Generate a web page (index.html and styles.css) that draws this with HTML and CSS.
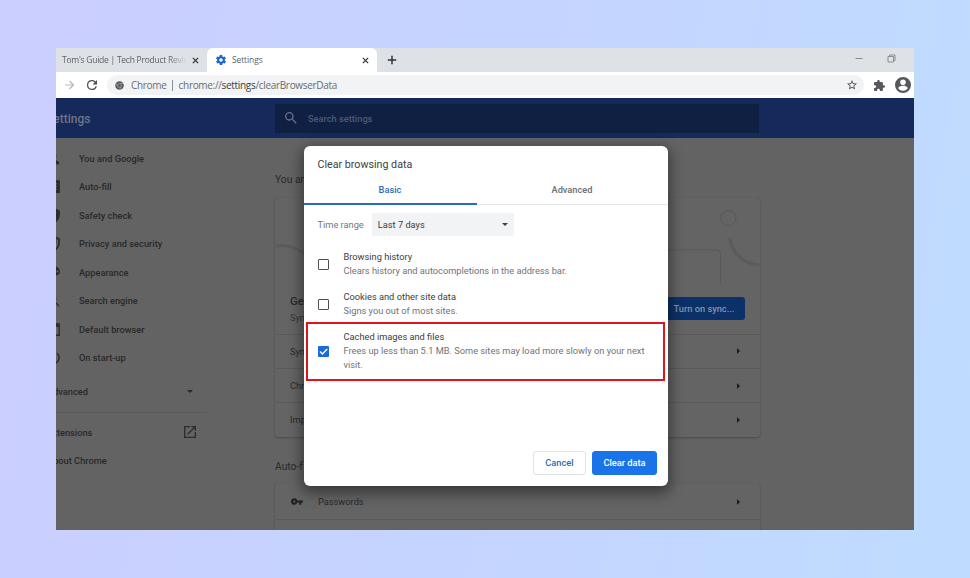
FILE: index.html
```html
<!DOCTYPE html>
<html lang="en">
<head>
<meta charset="UTF-8">
<meta name="viewport" content="width=device-width, initial-scale=1.0">
<title>Settings - Clear browsing data</title>
<link rel="stylesheet" href="styles.css">
</head>
<body>

<div class="window">
  <div class="tabs">
    <div class="tab">
      <span class="tab-title fade">Tom's Guide | Tech Product Review</span>
      <svg class="close" viewBox="0 0 8 8"><path d="M1 1l6 6M7 1L1 7"/></svg>
    </div>
    <div class="tab active">
      <svg class="gear" viewBox="0 0 24 24"><path d="M19.4 13c0-.3.1-.6.1-1s0-.7-.1-1l2.1-1.600c.2-.2.3-.4.1-.7l-2-3.400c-.1-.2-.4-.3-.6-.2l-2.500 1c-.5-.4-1.100-.7-1.700-1l-.4-2.600c0-.3-.2-.5-.5-.5h-4c-.2 0-.4.200-.5.400l-.4 2.700c-.6.300-1.200.600-1.700 1l-2.500-1c-.2-.1-.5 0-.6.200l-2 3.400c-.1.300-.1.600.1.700L4.600 11c0 .3-.1.600-.1 1s0 .7.100 1l-2.100 1.600c-.2.200-.3.400-.1.700l2 3.400c.1.200.4.300.6.200l2.500-1c.5.400 1.100.7 1.700 1l.4 2.600c0 .3.200.5.500.5h4c.2 0 .5-.2.500-.4l.4-2.700c.6-.3 1.200-.6 1.700-1l2.500 1c.2.100.5 0 .6-.2l2-3.400c.1-.2.100-.5-.1-.7L19.400 13zM12 15.500a3.500 3.500 0 1 1 0-7 3.500 3.500 0 0 1 0 7z"/></svg>
      <span class="tab-title">Settings</span>
      <svg class="close" viewBox="0 0 8 8"><path d="M1 1l6 6M7 1L1 7"/></svg>
    </div>
    <svg class="plus" viewBox="0 0 10 10"><path d="M5 .8v8.400M.8 5h8.400"/></svg>
    <div class="controls">
      <svg width="8" height="10" viewBox="0 0 8 10"><path d="M.5 4.500h7"/></svg>
      <svg width="9" height="9" viewBox="0 0 9 9"><path d="M1 2.500h5.500V8H1zM2.500 2.500V1H8v5.500H6.500"/></svg>
    </div>
  </div>

  <div class="toolbar">
    <svg class="forward" viewBox="0 0 11 10"><path d="M1 5h8.500M5.500 1l4 4-4 4"/></svg>
    <svg class="reload" viewBox="4 4 16 16"><path d="M17.650 6.350A7.960 7.960 0 0 0 12 4a8 8 0 1 0 7.730 10h-2.080A6 6 0 1 1 12 6c1.660 0 3.140.690 4.220 1.780L13 11h7V4l-2.350 2.350z"/></svg>
    <div class="omnibox">
      <svg class="chrome-icon" viewBox="0 0 20 20"><circle cx="10" cy="10" r="9.500"/><path d="M10 5.500h8.300M6.100 12.300L2 5.200M13.900 12.300l-4.200 7.200"/><circle class="ring" cx="10" cy="10" r="4.300"/></svg>
      <span class="scheme">Chrome</span>
      <span class="sep"></span>
      <span class="url">chrome://<b>settings</b>/clearBrowserData</span>
      <svg class="star" viewBox="2 2 20 20"><path d="M22 9.240l-7.190-.620L12 2 9.190 8.630 2 9.240l5.460 4.730L5.820 21 12 17.270 18.180 21l-1.630-7.030L22 9.240zM12 15.400l-3.760 2.270 1-4.280-3.320-2.880 4.380-.380L12 6.100l1.710 4.040 4.380.380-3.320 2.880 1 4.280L12 15.400z"/></svg>
    </div>
    <svg class="puzzle" viewBox="2 1 21 21"><path d="M20.500 11H19V7a2 2 0 0 0-2-2h-4V3.500a2.500 2.500 0 0 0-5 0V5H4a2 2 0 0 0-2 2v3.800h1.500a2.700 2.700 0 0 1 0 5.400H2V20c0 1.100.900 2 2 2h3.800v-1.500a2.700 2.700 0 0 1 5.400 0V22H17a2 2 0 0 0 2-2v-4h1.500a2.500 2.500 0 0 0 0-5z"/></svg>
    <svg class="avatar" viewBox="2 2 20 20"><path d="M12 2a10 10 0 1 0 0 20 10 10 0 0 0 0-20zm0 3a3.500 3.500 0 1 1 0 7 3.500 3.500 0 0 1 0-7zm0 14.200a7.200 7.200 0 0 1-6-3.220c.03-1.990 4-3.080 6-3.080s5.970 1.090 6 3.080a7.200 7.200 0 0 1-6 3.220z"/></svg>
  </div>

  <div class="header">
    <h1>Settings</h1>
    <div class="search">
      <svg viewBox="3 3 18 18"><path d="M15.500 14h-.790l-.280-.270A6.500 6.500 0 1 0 13.730 14.430l.270.280v.790l5 4.990L20.490 19l-4.990-5zm-6 0a4.500 4.500 0 1 1 0-9 4.500 4.500 0 0 1 0 9z"/></svg>
      <span>Search settings</span>
    </div>
  </div>

  <div class="page">
    <div class="sidebar">
      <div class="item"><svg viewBox="0 0 24 24"><path d="M12 12a4 4 0 1 0 0-8 4 4 0 0 0 0 8zm0 2c-2.700 0-8 1.300-8 4v2h16v-2c0-2.700-5.300-4-8-4z"/></svg>You and Google</div>
      <div class="item"><svg viewBox="0 0 24 24"><path d="M3 3h18v18H3zM7 7v2h10V7zm0 4v2h10v-2zm0 4v2h10v-2z" fill-rule="evenodd"/></svg>Auto-fill</div>
      <div class="item"><svg viewBox="0 0 24 24"><path d="M12 1L3 5v6c0 5.500 3.800 10.700 9 12 5.200-1.300 9-6.500 9-12V5l-9-4zm-2 16l-4-4 1.400-1.400L10 14.200l4-4L15.400 11.600l-5.400 5.400z"/></svg>Safety check</div>
      <div class="item"><svg viewBox="0 0 24 24"><path d="M12 1L3 5v6c0 5.500 3.800 10.700 9 12 5.200-1.300 9-6.500 9-12V5l-9-4zm0 3l6.500 2.800V11c0 4.300-2.700 8.200-6.500 9.500V12h4V7h-4z" fill-rule="evenodd"/></svg>Privacy and security</div>
      <div class="item"><svg viewBox="0 0 24 24"><path d="M12 3a9 9 0 0 0 0 18c.8 0 1.500-.7 1.500-1.500 0-1-1-1.300-1-2 0-.8.700-1.500 1.500-1.500H16c2.800 0 5-2.200 5-5 0-4.400-4-8-9-8zm5.500 9a1.500 1.500 0 1 1 0-3 1.500 1.500 0 0 1 0 3z"/></svg>Appearance</div>
      <div class="item"><svg viewBox="0 0 24 24"><path d="M15.500 14h-.790l-.280-.270A6.500 6.500 0 1 0 13.730 14.430l.270.280v.790l5 4.990L20.490 19l-4.990-5zm-6 0a4.500 4.500 0 1 1 0-9 4.500 4.500 0 0 1 0 9z"/></svg>Search engine</div>
      <div class="item"><svg viewBox="0 0 24 24"><path d="M3 3h18v18H3zM5 8v11h14V8z" fill-rule="evenodd"/></svg>Default browser</div>
      <div class="item"><svg viewBox="0 0 24 24"><path d="M13 3h-2v10h2V3zm4.800 2.200l-1.400 1.400A7 7 0 1 1 7.600 6.600L6.200 5.200a9 9 0 1 0 11.600 0z"/></svg>On start-up</div>
      <div class="item wide advanced">Advanced<i class="down"></i></div>
      <div class="item wide">Extensions
        <svg class="launch" viewBox="3 3 18 18"><path d="M19 19H5V5h7V3H3v18h18v-9h-2v7zM14 3v2h3.600l-9.800 9.800 1.400 1.400L19 6.400V10h2V3h-7z"/></svg>
      </div>
      <div class="item wide">About Chrome</div>
    </div>

    <div class="main">
      <h2>You ar</h2>
      <div class="card">
        <svg class="art" viewBox="0 0 484 85">
          <path class="thick" d="M0 48Q22 44 42 68"/>
          <path d="M160 85V52h281q4 0 4 4v29"/>
          <circle cx="453" cy="20" r="7.500"/>
          <path class="thick" d="M454 40q5 25 30 27"/>
        </svg>
        <div class="sync">
          <div>
            <h3>Ge</h3>
            <p>Syn</p>
          </div>
          <span class="sync-btn">Turn on sync...</span>
        </div>
        <div class="row">Syn<i class="right"></i></div>
        <div class="row">Chr<i class="right"></i></div>
        <div class="row">Imp<i class="right"></i></div>
      </div>
      <h2 class="second">Auto-f</h2>
      <div class="card">
        <div class="row first">
          <svg class="key" viewBox="1 6 22 12"><path d="M12.650 10A6 6 0 1 0 12.650 14H16v4h4v-4h3v-4H12.650zM7 14a2 2 0 1 1 0-4 2 2 0 0 1 0 4z"/></svg>
          Passwords<i class="right"></i>
        </div>
        <div class="row"></div>
      </div>
    </div>
  </div>

  <div class="dialog">
    <div class="dialog-title">Clear browsing data</div>
    <div class="dialog-tabs">
      <span class="selected">Basic</span>
      <span>Advanced</span>
    </div>
    <div class="range">
      <span>Time range</span>
      <div class="select">Last 7 days<i class="down"></i></div>
    </div>
    <div class="option">
      <span class="box"></span>
      <div><h4>Browsing history</h4><p>Clears history and autocompletions in the address bar.</p></div>
    </div>
    <div class="option">
      <span class="box"></span>
      <div><h4>Cookies and other site data</h4><p>Signs you out of most sites.</p></div>
    </div>
    <div class="option cached">
      <span class="box checked"><svg viewBox="0 0 11 11"><path d="M2 5.600l2.400 2.400L9.200 3"/></svg></span>
      <div><h4>Cached images and files</h4><p>Frees up less than 5.1 MB. Some sites may load more slowly on your next visit.</p></div>
    </div>
    <div class="buttons">
      <span class="btn">Cancel</span>
      <span class="btn primary">Clear data</span>
    </div>
    <div class="highlight"></div>
  </div>
</div>

</body>
</html>
```

FILE: styles.css
```css
* {
  margin: 0;
  padding: 0;
  box-sizing: border-box;
}

body {
  height: 578px;
  padding: 48px 56px;
  overflow: hidden;
  background: linear-gradient(100deg, #cbceff 0%, #c5d4ff 50%, #bfdcff 100%);
  font-family: Roboto, "Liberation Sans", sans-serif;
  font-size: 9.26px;
}

svg {
  display: block;
  flex: none;
}

.window {
  position: relative;
  width: 858px;
  height: 482px;
  overflow: hidden;
  background: #636363;
}

/* Tab strip */
.tabs {
  display: flex;
  align-items: center;
  height: 24px;
  background: #dee1e6;
  color: #5f6368;
  font-family: "Open Sans", "Noto Sans", sans-serif;
  font-size: 8.5px;
  letter-spacing: -0.12px;
}

.tab {
  display: flex;
  align-items: center;
  width: 151px;
  height: 24px;
  padding: 0 8px 0 6px;
}

.tab.active {
  width: 170px;
  padding-left: 8px;
  background: #fff;
  border-radius: 6px 6px 0 0;
}

.tab-title {
  flex: 1;
  padding-bottom: 1px;
  overflow: hidden;
  white-space: nowrap;
}

.fade {
  margin-right: 5px;
  letter-spacing: -0.25px;
  -webkit-mask-image: linear-gradient(90deg, #000 85%, transparent);
  mask-image: linear-gradient(90deg, #000 85%, transparent);
}

.close {
  width: 7px;
  height: 7px;
  fill: none;
  stroke: #303236;
  stroke-width: 1.4;
}

.gear {
  width: 12px;
  height: 12px;
  margin-right: 5px;
  fill: #1967d2;
}

.plus {
  width: 10px;
  height: 10px;
  margin-left: 10px;
  fill: none;
  stroke: #303236;
  stroke-width: 1.5;
}

.controls {
  display: flex;
  gap: 24px;
  margin: -3px 18px 0 auto;
  fill: none;
  stroke: #8b8d91;
  stroke-width: 1;
}

/* Toolbar */
.toolbar {
  display: flex;
  align-items: center;
  height: 26px;
  padding: 0 3px 0 8px;
  background: #fff;
  font-family: "Open Sans", "Noto Sans", sans-serif;
  font-size: 10px;
  color: #6a6d71;
}

.forward {
  width: 11px;
  height: 10px;
  fill: none;
  stroke: #b5b7ba;
  stroke-width: 1.2;
}

.reload {
  width: 10px;
  height: 10px;
  margin: 0 10px 0 12px;
  fill: #4c4f53;
}

.omnibox {
  display: flex;
  align-items: center;
  width: 757px;
  height: 20px;
  padding: 0 7px 0 8px;
  border-radius: 10px;
  background: #f1f3f4;
}

.chrome-icon {
  width: 9px;
  height: 9px;
  margin-right: 7px;
  fill: #55585c;
}

.chrome-icon path,
.chrome-icon .ring {
  stroke: #b4b6b9;
  stroke-width: 1.4;
}

.scheme {
  letter-spacing: -0.3px;
}

.sep {
  width: 1px;
  height: 11px;
  margin: 0 6px 0 5px;
  background: #8d9094;
}

.url {
  letter-spacing: -0.32px;
}

.url b {
  font-weight: 400;
  color: #3c3e41;
}

.star {
  width: 10px;
  height: 10px;
  margin-left: auto;
  fill: #4c4f53;
}

.puzzle {
  width: 11px;
  height: 11px;
  margin: 0 auto;
  fill: #55585c;
}

.avatar {
  width: 16px;
  height: 16px;
  fill: #55585c;
}

/* Settings header */
.header {
  display: flex;
  align-items: center;
  height: 40px;
  background: #16295b;
  color: #6d7587;
}

.header h1 {
  width: 229px;
  margin-left: -10px;
  padding-top: 1px;
  font-size: 12px;
  font-weight: 500;
}

.search {
  display: flex;
  align-items: center;
  width: 484px;
  height: 29px;
  padding-left: 10px;
  background: #102042;
  color: #4f5a70;
  font-size: 9.26px;
  font-weight: 500;
}

.search svg {
  width: 12px;
  height: 12px;
  margin-right: 11px;
  fill: #66708a;
}

/* Page under the dialog */
.page {
  display: flex;
  height: 392px;
  color: #292929;
}

.sidebar {
  width: 227px;
  margin-left: -11px;
  padding-top: 5.8px;
  font-weight: 500;
}

.item {
  display: flex;
  align-items: center;
  height: 28.5px;
}

.item svg {
  width: 17px;
  height: 17px;
  margin-right: 17px;
  fill: #2b2c2e;
}

.item.wide {
  width: 162px;
  padding: 0 11px 0 2px;
  justify-content: space-between;
}

.item.advanced {
  height: 41px;
  margin-bottom: 5px;
  padding-right: 14px;
  border-bottom: 1px solid #5b5b5b;
}

.item .launch {
  width: 12px;
  height: 12px;
  margin: 0;
}

.down {
  border: 3.5px solid transparent;
  border-top-color: currentColor;
  border-bottom: 0;
}

.right {
  margin-left: auto;
  border: 3px solid transparent;
  border-left: 3.5px solid #1c1c1c;
  border-right: 0;
}

.main {
  width: 485px;
  margin-left: 3px;
}

.main h2 {
  height: 60px;
  padding-top: 35px;
  font-size: 10.3px;
  font-weight: 400;
  line-height: 13px;
}

.main h2.second {
  height: 47px;
  padding-top: 23px;
}

.card {
  overflow: hidden;
  border-radius: 3px;
  background: #646464;
  box-shadow: 0 1px 2px #4c4c4c, 0 0 1px #505050;
}

.art {
  width: 485px;
  height: 85px;
  fill: none;
  stroke: #585858;
  stroke-width: 1;
}

.art .thick {
  stroke: #5b5b5b;
  stroke-width: 3;
}

.sync {
  display: flex;
  align-items: center;
  justify-content: space-between;
  height: 50.5px;
  padding: 0 15px;
}

.sync h3 {
  font-size: 11.4px;
  font-weight: 500;
  line-height: 18px;
}

.sync p {
  line-height: 15px;
  color: #363636;
}

.sync-btn {
  width: 82px;
  height: 23px;
  border-radius: 3px;
  background: #0c3168;
  color: #8493ab;
  font-weight: 500;
  line-height: 23px;
  text-align: center;
}

.row {
  display: flex;
  align-items: center;
  height: 34.4px;
  padding: 0 20px 0 15px;
  border-top: 1px solid #5a5a5a;
}

.row.first {
  height: 35px;
  padding-top: 1px;
  border-top: 0;
}

.key {
  width: 12px;
  height: 7px;
  margin-left: 1px;
  margin-right: 15px;
  fill: #222;
}

/* Clear browsing data dialog */
.dialog {
  position: absolute;
  left: 247.5px;
  top: 97.5px;
  display: flex;
  flex-direction: column;
  width: 364.5px;
  height: 340.5px;
  border-radius: 6px;
  background: #fff;
  color: #3c4043;
  box-shadow: 0 5px 14px 2px rgba(0, 0, 0, 0.45);
}

.dialog-title {
  height: 30px;
  padding: 12px 14px 0;
  font-size: 10.7px;
  line-height: 14px;
}

.dialog-tabs {
  display: flex;
  height: 29px;
  border-bottom: 1px solid #e4e5e7;
  color: #6b6e72;
  font-weight: 500;
  line-height: 27px;
  text-align: center;
}

.dialog-tabs span {
  width: 191px;
}

.dialog-tabs .selected {
  width: 173px;
  height: 29px;
  border-bottom: 2px solid #2a6cc0;
  color: #2a6cb8;
}

.range {
  display: flex;
  align-items: center;
  height: 40px;
  padding-left: 14px;
  color: #74777b;
}

.select {
  display: flex;
  align-items: center;
  justify-content: space-between;
  width: 142.5px;
  height: 23px;
  margin-left: 8px;
  padding: 0 6px;
  border-radius: 2px;
  background: #f1f3f4;
  color: #3c4043;
}

.option {
  display: flex;
  align-items: center;
  height: 40px;
  padding: 0 18px 0 14px;
  line-height: 14px;
}

.option.cached {
  height: 54px;
}

.option h4 {
  font-size: 9.26px;
  font-weight: 400;
}

.option div {
  padding-bottom: 1px;
}

.option p {
  color: #707377;
}

.box {
  flex: none;
  width: 11px;
  height: 11px;
  margin-right: 15px;
  border: 1.4px solid #4d5054;
  border-radius: 1px;
}

.box.checked {
  border: 0;
  background: #1a6ad8;
}

.box svg {
  fill: none;
  stroke: #fff;
  stroke-width: 1.4;
}

.buttons {
  display: flex;
  justify-content: flex-end;
  gap: 6px;
  margin-top: auto;
  padding: 0 11px 11px 0;
}

.btn {
  width: 53px;
  height: 24px;
  border: 1px solid #e0e2e6;
  border-radius: 3px;
  color: #2a6cb8;
  font-weight: 500;
  line-height: 22px;
  text-align: center;
}

.btn.primary {
  width: 65px;
  border-color: #1a73e8;
  background: #1a73e8;
  color: #fff;
}

.highlight {
  position: absolute;
  left: 2px;
  top: 176.5px;
  width: 359px;
  height: 59px;
  border: 2px solid #df141d;
}
```
